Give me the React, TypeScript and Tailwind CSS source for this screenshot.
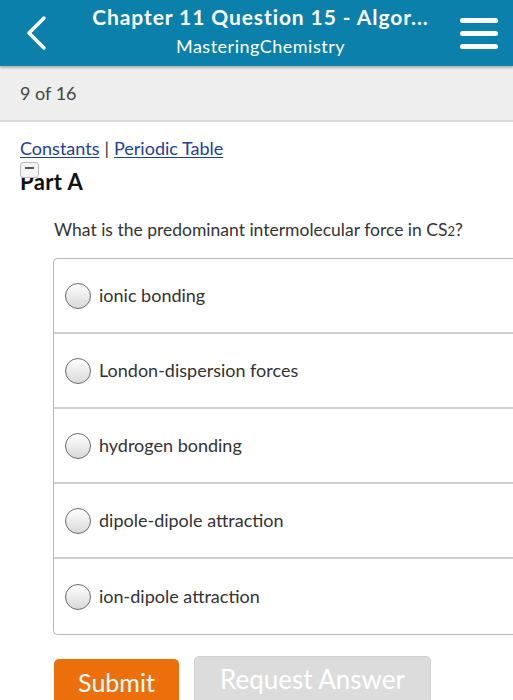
import React from "react";

const options = [
  "ionic bonding",
  "London-dispersion forces",
  "hydrogen bonding",
  "dipole-dipole attraction",
  "ion-dipole attraction",
];

const Radio: React.FC = () => (
  <span className="inline-block w-[26px] h-[26px] rounded-full border-[1.5px] border-[#6b6b6b] bg-gradient-to-b from-white to-[#d9d9d9] shrink-0" />
);

export default function App() {
  return (
    <div className="w-[513px] h-[700px] overflow-hidden bg-white font-['Lato','Open_Sans',sans-serif] text-[#333]">
      {/* top bar */}
      <div className="h-[66px] bg-[#0b80ab] flex items-center text-white shadow-[0_2px_2px_rgba(0,0,0,0.25)] relative z-10">
        <div className="w-[64px] flex justify-center pl-2">
          <svg width="24" height="36" viewBox="0 0 24 36" fill="none">
            <path d="M20 3 L5 18 L20 33" stroke="white" strokeWidth="3.5" strokeLinecap="round" strokeLinejoin="round" />
          </svg>
        </div>
        <div className="flex-1 flex flex-col items-center leading-none">
          <div className="text-[21px] font-bold tracking-[0.9px] mt-[-6px]">Chapter 11 Question 15 - Algor...</div>
          <div className="text-[18px] tracking-[0.5px] mt-[10px]">MasteringChemistry</div>
        </div>
        <div className="w-[56px] flex flex-col items-start gap-[8px] pl-[3px]">
          <span className="block w-[38px] h-[5px] rounded-full bg-white" />
          <span className="block w-[38px] h-[5px] rounded-full bg-white" />
          <span className="block w-[38px] h-[5px] rounded-full bg-white" />
        </div>
      </div>

      {/* counter bar */}
      <div className="h-[56px] bg-[#eeeeee] border-b-2 border-[#dcdcdc] flex items-center pl-[20px] text-[18px] text-[#444]">
        9 of 16
      </div>

      {/* content */}
      <div className="pl-[20px] pt-[15px]">
        <div className="text-[18px] text-[#333] leading-[22px]">
          <a className="text-[#1d3f94] underline underline-offset-2">Constants</a>
          <span className="mx-[5px]">|</span>
          <a className="text-[#1d3f94] underline underline-offset-2">Periodic Table</a>
        </div>
        <div className="relative h-[32px]">
          <span className="absolute left-0 top-[3px] w-[19px] h-[16px] rounded-[3px] border border-[#bbb] bg-[#f4f4f4] flex items-start justify-center pt-[4px]">
            <span className="block w-[9px] h-[2px] bg-[#555]" />
          </span>
          <div className="pt-[11px] text-[22px] font-bold tracking-[0.4px] text-[#111] leading-[24px]">Part A</div>
        </div>
        <div className="pl-[34px] pt-[26px] text-[17.5px] text-[#333]">
          What is the predominant intermolecular force in CS<span className="text-[13px] align-baseline">2</span>?
        </div>
      </div>

      {/* options */}
      <div className="ml-[53px] mt-[15px] border border-r-0 border-[#b8b8b8] rounded-l-[5px]">
        {options.map((o, i) => (
          <div
            key={o}
            className={
              "h-[75px] flex items-center pl-[11px] gap-[8px] text-[18px] text-[#333] " +
              (i < options.length - 1 ? "border-b-2 border-[#cfcfcf]" : "")
            }
          >
            <Radio />
            <span>{o}</span>
          </div>
        ))}
      </div>

      {/* buttons */}
      <div className="ml-[54px] mt-[21px] flex items-start gap-[15px]">
        <button className="w-[125px] h-[48px] mt-[3px] rounded-[5px] bg-[#ec6f0c] text-white text-[25px] leading-[30px] pt-[8px] flex justify-center items-start">
          Submit
        </button>
        <button className="w-[237px] h-[48px] rounded-[5px] bg-[#dcdcdc] border border-[#cfcfcf] text-white text-[26px] pb-[2px]">
          Request Answer
        </button>
      </div>
    </div>
  );
}
